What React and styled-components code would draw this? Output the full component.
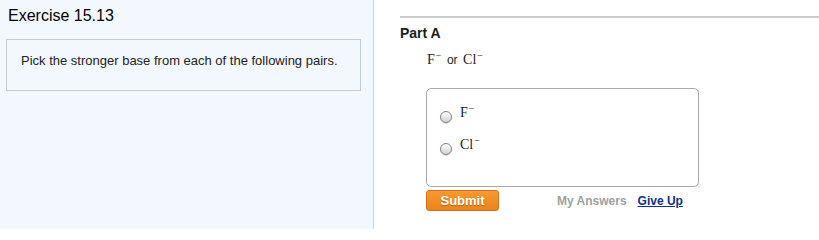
import styled, { createGlobalStyle } from "styled-components";

const GlobalStyle = createGlobalStyle`
  html, body {
    margin: 0;
    padding: 0;
    background: #ffffff;
  }
  body {
    font-family: "Liberation Sans", Arial, sans-serif;
    color: #1a1a1a;
  }
`;

const Page = styled.div`
  display: flex;
  width: 819px;
  height: 229px;
  overflow: hidden;
`;

const Sidebar = styled.aside`
  width: 374px;
  flex-shrink: 0;
  background: #f3f8fe;
  border-right: 1px solid #c7d6e6;
  padding: 6px 0 0 8px;
  box-sizing: border-box;
`;

const Title = styled.h1`
  margin: 0;
  font-size: 16px;
  line-height: 20px;
  font-weight: normal;
  color: #000;
`;

const Intro = styled.div`
  margin: 13px 0 0 -2px;
  width: 355px;
  height: 52px;
  box-sizing: border-box;
  border: 1px solid #bccfe1;
  padding: 13px 0 0 14px;
  font-size: 13px;
  line-height: 16px;
  color: #222;
`;

const Main = styled.main`
  flex: 1;
  padding: 16px 0 0 26px;
`;

const Rule = styled.hr`
  margin: 0;
  border: none;
  height: 2px;
  background: #cccccc;
`;

const PartTitle = styled.h2`
  margin: 7px 0 0;
  font-size: 14px;
  line-height: 16px;
  font-weight: bold;
  color: #1c1c1c;
`;

const Question = styled.p`
  margin: 10px 0 0 27px;
  font-family: "Liberation Serif", "Times New Roman", serif;
  font-size: 14px;
  line-height: 18px;
  word-spacing: 2px;
  color: #222;
`;

const Word = styled.span`
  font-family: "Liberation Sans", Arial, sans-serif;
  font-size: 12px;
`;

const Charge = styled.sup`
  font-size: 10px;
  line-height: 0;
  vertical-align: 5px;
  margin-left: 1px;
`;

const ChoiceBox = styled.div`
  margin: 19px 0 0 26px;
  width: 273px;
  height: 99px;
  box-sizing: border-box;
  border: 1px solid #a9a9a9;
  border-radius: 5px;
  padding: 15px 0 0 13px;
  background: #fff;
`;

const Option = styled.label`
  display: flex;
  align-items: flex-start;
  height: 32px;
  font-family: "Liberation Serif", "Times New Roman", serif;
  font-size: 14px;
  line-height: 18px;
  color: #222;
`;

const Radio = styled.input`
  appearance: none;
  margin: 7px 8px 0 0;
  width: 12px;
  height: 12px;
  border-radius: 50%;
  border: 1px solid #7f7f7f;
  background: linear-gradient(#fdfdfd, #d4d4d4);
  box-shadow: inset 0 1px 1px rgba(255, 255, 255, 0.9), 0 1px 1px rgba(0, 0, 0, 0.15);
  box-sizing: border-box;
`;

const Actions = styled.div`
  display: flex;
  align-items: center;
  margin: 3px 0 0 26px;
  font-size: 12px;
  font-weight: bold;
`;

const SubmitButton = styled.button`
  width: 73px;
  height: 21px;
  padding: 0;
  border: 1px solid #d2711b;
  border-radius: 3px;
  background: linear-gradient(#f49a30, #ec841d);
  color: #fff;
  font-family: "Liberation Sans", Arial, sans-serif;
  font-size: 13px;
  font-weight: bold;
  text-shadow: 0 1px 1px rgba(120, 60, 0, 0.5);
`;

const MutedLink = styled.span`
  margin-left: 58px;
  color: #a0a0a0;
`;

const ActionLink = styled.a`
  margin-left: 11px;
  color: #102f8c;
  text-decoration: underline;
`;

const Ion = ({ symbol }) => (
  <span>
    {symbol}
    <Charge>−</Charge>
  </span>
);

export default function App() {
  return (
    <>
      <GlobalStyle />
      <Page>
        <Sidebar>
          <Title>Exercise 15.13</Title>
          <Intro>Pick the stronger base from each of the following pairs.</Intro>
        </Sidebar>
        <Main>
          <Rule />
          <PartTitle>Part A</PartTitle>
          <Question>
            <Ion symbol="F" /> <Word>or</Word> <Ion symbol="Cl" />
          </Question>
          <ChoiceBox>
            <Option>
              <Radio type="radio" name="base" />
              <Ion symbol="F" />
            </Option>
            <Option>
              <Radio type="radio" name="base" />
              <Ion symbol="Cl" />
            </Option>
          </ChoiceBox>
          <Actions>
            <SubmitButton>Submit</SubmitButton>
            <MutedLink>My Answers</MutedLink>
            <ActionLink href="#">Give Up</ActionLink>
          </Actions>
        </Main>
      </Page>
    </>
  );
}
